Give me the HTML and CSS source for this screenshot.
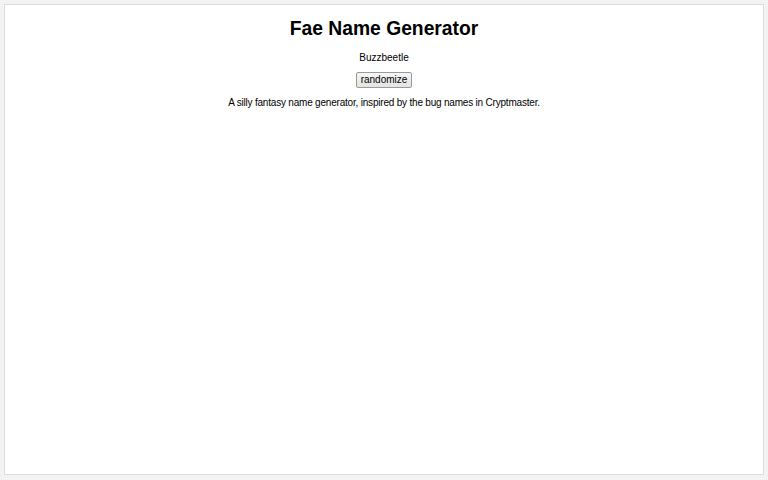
FILE: index.html
```html
<!DOCTYPE html>
<html lang="en">
<head>
<meta charset="utf-8">
<title>Fae Name Generator</title>
<link rel="stylesheet" href="styles.css">
</head>
<body>
<main class="page">
  <h1 class="title">Fae Name Generator</h1>
  <p class="name">Buzzbeetle</p>
  <p class="actions"><button class="randomize" type="button">randomize</button></p>
  <p class="about">A silly fantasy name generator, inspired by the bug names in Cryptmaster.</p>
</main>
</body>
</html>
```
FILE: styles.css
```css
html, body {
  margin: 0;
  height: 100%;
}

body {
  background: #f3f3f3;
  padding: 4px 4px 5px 4px;
  box-sizing: border-box;
  font-family: "Liberation Sans", Arial, sans-serif;
  color: #000;
}

.page {
  box-sizing: border-box;
  height: 100%;
  background: #fff;
  border: 1px solid #dcdcdc;
  text-align: center;
  padding-top: 12px;
}

.title {
  margin: 0 0 12px;
  font-size: 19.3px;
  font-weight: bold;
  line-height: 23px;
}

.name {
  margin: 0 0 8px;
  font-size: 10px;
  line-height: 12px;
}

.actions {
  margin: 0 0 9px;
  line-height: 0;
}

.randomize {
  box-sizing: border-box;
  height: 16px;
  font-family: "Liberation Sans", Arial, sans-serif;
  font-size: 10px;
  line-height: 12px;
  padding: 1px 4px;
  border: 1px solid #9a9a9a;
  border-radius: 2px;
  background: linear-gradient(#f6f6f6, #e3e3e3);
  color: #000;
}

.about {
  margin: 0;
  font-size: 10px;
  line-height: 12px;
  letter-spacing: -0.2px;
}
```
